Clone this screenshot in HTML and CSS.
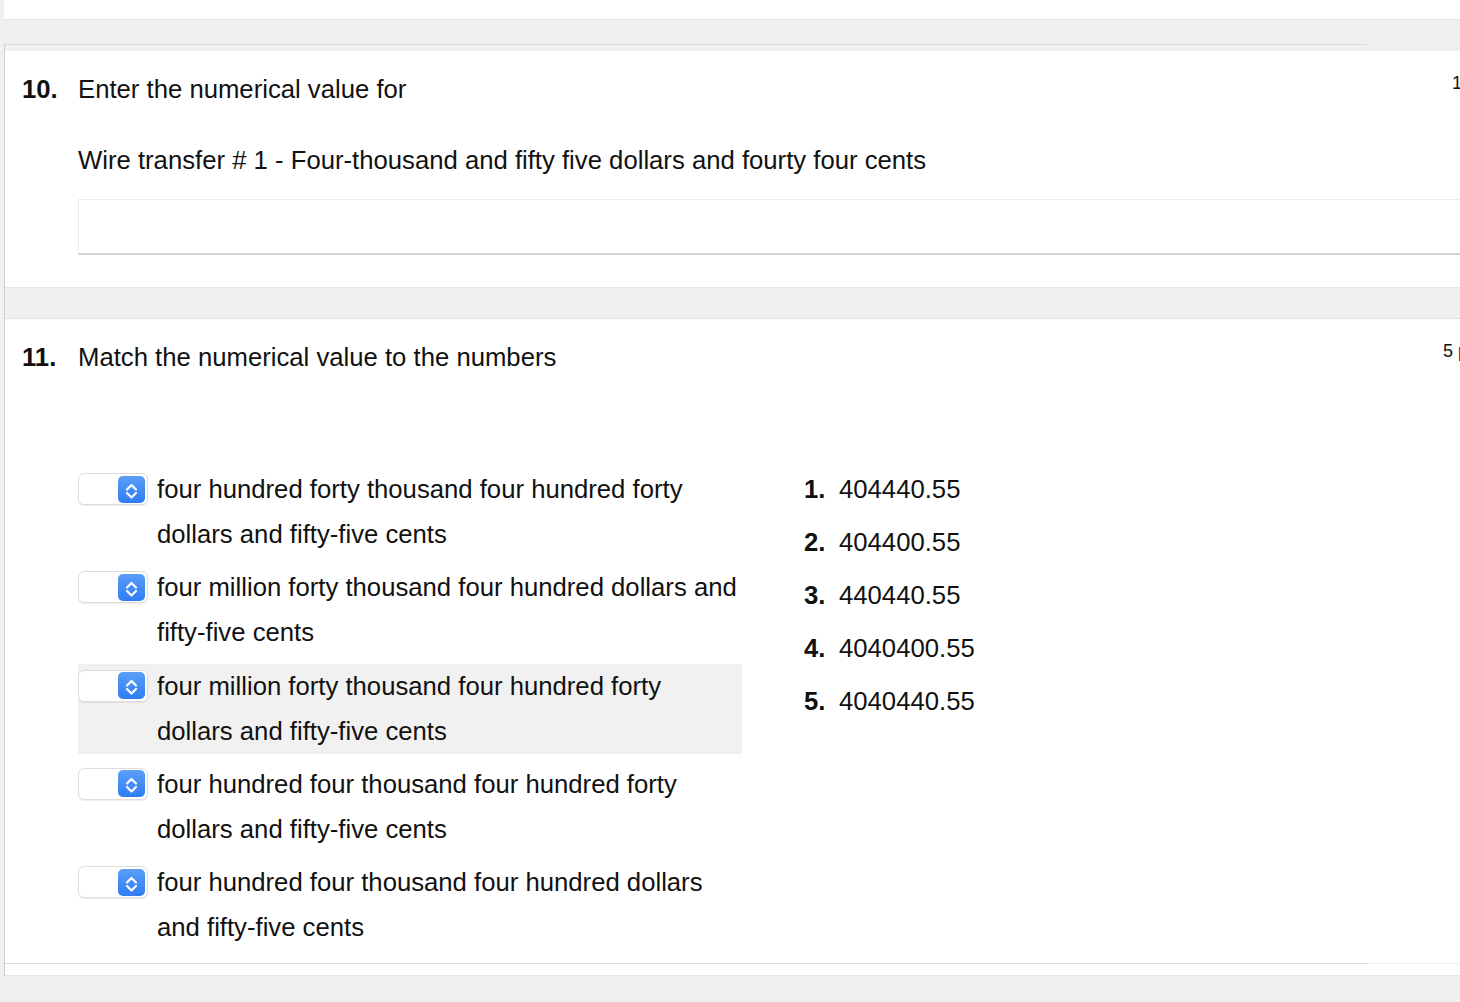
FILE: index.html
```html
<!DOCTYPE html>
<html lang="en">
<head>
<meta charset="utf-8">
<title>Questions</title>
<link rel="stylesheet" href="styles.css">
</head>
<body>
<div class="top"></div>
<div class="sheet">
  <div class="rule"></div>
  <div class="strip"></div>

  <section class="question q10">
    <div class="qrow">
      <div class="num">10.</div>
      <div class="qbody">
        <div class="qtitle">Enter the numerical value for</div>
        <div class="qtext">Wire transfer # 1 - Four-thousand and fifty five dollars and fourty four cents</div>
        <div class="answer"></div>
      </div>
      <div class="pts">1 point</div>
    </div>
  </section>

  <div class="band"></div>

  <section class="question q11">
    <div class="qrow">
      <div class="num">11.</div>
      <div class="qbody">
        <div class="qtitle">Match the numerical value to the numbers</div>
        <div class="match">
          <div class="pairs">
            <div class="pair">
              <span class="select"><span class="stepper"><svg viewBox="0 0 27 27" width="27" height="27"><path d="M9 13.5 L13.5 9 L18 13.5 M9 17 L13.5 21.5 L18 17" fill="none" stroke="#fff" stroke-width="2.2" stroke-linecap="round" stroke-linejoin="round"/></svg></span></span>
              <span class="ptext">four hundred forty thousand four hundred forty dollars and fifty-five cents</span>
            </div>
            <div class="pair">
              <span class="select"><span class="stepper"><svg viewBox="0 0 27 27" width="27" height="27"><path d="M9 13.5 L13.5 9 L18 13.5 M9 17 L13.5 21.5 L18 17" fill="none" stroke="#fff" stroke-width="2.2" stroke-linecap="round" stroke-linejoin="round"/></svg></span></span>
              <span class="ptext">four million forty thousand four hundred dollars and fifty-five cents</span>
            </div>
            <div class="pair hl">
              <span class="select"><span class="stepper"><svg viewBox="0 0 27 27" width="27" height="27"><path d="M9 13.5 L13.5 9 L18 13.5 M9 17 L13.5 21.5 L18 17" fill="none" stroke="#fff" stroke-width="2.2" stroke-linecap="round" stroke-linejoin="round"/></svg></span></span>
              <span class="ptext">four million forty thousand four hundred forty dollars and fifty-five cents</span>
            </div>
            <div class="pair">
              <span class="select"><span class="stepper"><svg viewBox="0 0 27 27" width="27" height="27"><path d="M9 13.5 L13.5 9 L18 13.5 M9 17 L13.5 21.5 L18 17" fill="none" stroke="#fff" stroke-width="2.2" stroke-linecap="round" stroke-linejoin="round"/></svg></span></span>
              <span class="ptext">four hundred four thousand four hundred forty dollars and fifty-five cents</span>
            </div>
            <div class="pair">
              <span class="select"><span class="stepper"><svg viewBox="0 0 27 27" width="27" height="27"><path d="M9 13.5 L13.5 9 L18 13.5 M9 17 L13.5 21.5 L18 17" fill="none" stroke="#fff" stroke-width="2.2" stroke-linecap="round" stroke-linejoin="round"/></svg></span></span>
              <span class="ptext">four hundred four thousand four hundred dollars and fifty-five cents</span>
            </div>
          </div>
          <ol class="choices">
            <li><b>1.</b><span>404440.55</span></li>
            <li><b>2.</b><span>404400.55</span></li>
            <li><b>3.</b><span>440440.55</span></li>
            <li><b>4.</b><span>4040400.55</span></li>
            <li><b>5.</b><span>4040440.55</span></li>
          </ol>
        </div>
      </div>
      <div class="pts">5 points</div>
    </div>
  </section>

  <div class="rule"></div>
  <div class="foot"></div>
</div>
</body>
</html>
```

FILE: styles.css
```css
html, body {
  margin: 0;
  padding: 0;
}
body {
  background: #f0f0f0;
  overflow: hidden;
  font-family: "Liberation Sans", Arial, Helvetica, sans-serif;
  color: #111;
  width: 1460px;
  height: 1002px;
}
.top {
  margin-left: 4px;
  height: 19px;
  background: #fff;
  border-bottom: 1px solid #e4e4e4;
  width: 1600px;
}
.sheet {
  margin-top: 24px;
  margin-left: 4px;
  width: 1520px;
  border-left: 1px solid #cfcfcf;
}
.rule {
  height: 1px;
  width: 1362px;
  background: #dcdcdc;
}
.strip {
  height: 6px;
  background: #f0f0f0;
}
.question {
  background: #fff;
}
.q10 {
  padding: 23px 0 32px;
  height: 181px;
}
.q11 {
  padding: 23px 0 13px;
  height: 608px;
}
.band {
  height: 30px;
  background: #f0f0f0;
  border-top: 1px solid #e6e6e6;
  border-bottom: 1px solid #e2e2e2;
}
.foot {
  height: 11px;
  background: #fff;
  border-bottom: 1px solid #e8e8e8;
}
.qrow {
  display: flex;
  align-items: flex-start;
}
.num {
  width: 56px;
  padding-left: 17px;
  font-weight: bold;
  font-size: 25.7px;
  line-height: 31px;
  flex: none;
}
.qbody {
  flex: 1;
  min-width: 0;
  font-size: 25.7px;
  line-height: 31px;
}
.pts {
  flex: none;
  width: 80px;
  padding-right: 19px;
  text-align: right;
  font-size: 18px;
  line-height: 18px;
  white-space: nowrap;
  color: #111;
}
.qtext {
  margin-top: 40px;
}
.answer {
  margin-top: 23px;
  width: 1450px;
  height: 53px;
  border-top: 1px solid #ececec;
  border-left: 1px solid #ececec;
  border-bottom: 2px solid #d2d2d2;
  background: #fff;
}
.match {
  margin-top: 94px;
  display: flex;
  gap: 62px;
  align-items: flex-start;
}
.pairs {
  width: 664px;
  display: flex;
  flex-direction: column;
  gap: 8.25px;
}
.pair {
  display: flex;
  align-items: flex-start;
  gap: 9px;
  height: 90px;
  line-height: 45px;
}
.pair.hl {
  background: #f1f1f1;
}
.ptext {
  width: 585px;
}
.select {
  flex: none;
  margin-top: 6px;
  width: 68px;
  height: 30px;
  border: 1px solid #dedede;
  border-radius: 6px;
  background: #fff;
  box-shadow: 0 1px 1px rgba(0, 0, 0, 0.08);
  display: flex;
  justify-content: flex-end;
  align-items: center;
}
.stepper {
  width: 27px;
  height: 27px;
  margin-right: 2px;
  border-radius: 5px;
  background: linear-gradient(#5b9ef9, #2f7df5);
  display: block;
}
.stepper svg {
  display: block;
}
.choices {
  list-style: none;
  margin: 0;
  padding: 0;
  display: flex;
  flex-direction: column;
  gap: 8px;
  line-height: 45px;
}
.choices li {
  display: flex;
}
.choices b {
  width: 35px;
  flex: none;
}
```
